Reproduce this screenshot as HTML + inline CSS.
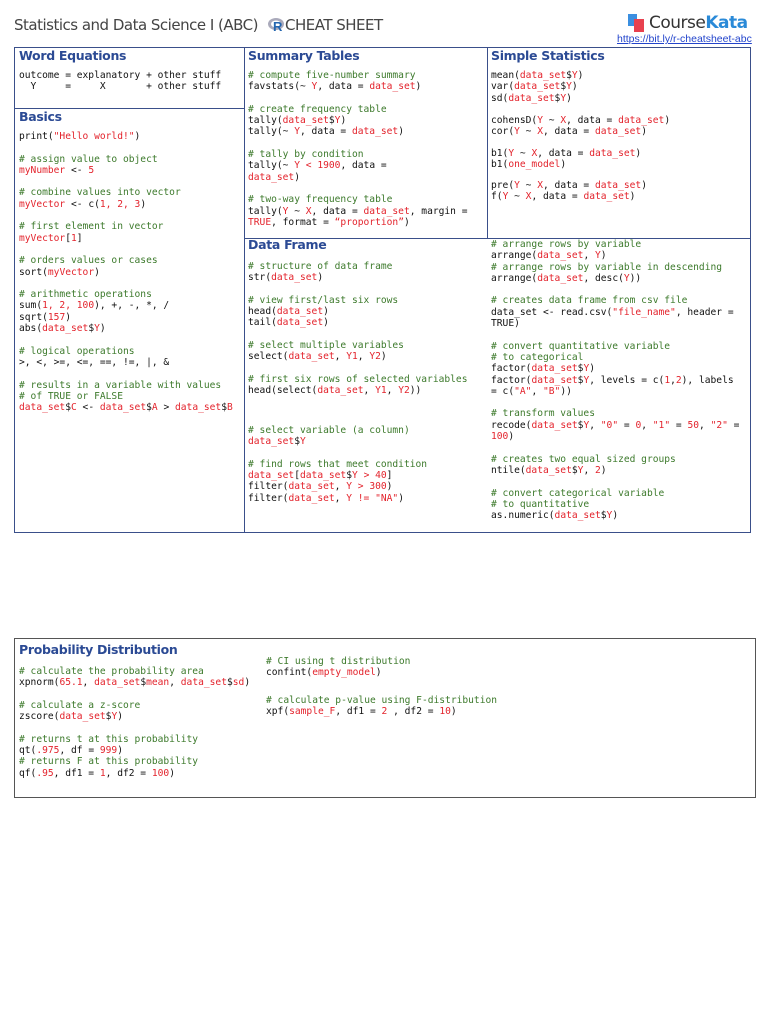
<!DOCTYPE html>
<html><head><meta charset="utf-8"><style>
body{margin:0;width:768px;height:1024px;background:#fff;position:relative;overflow:hidden;font-family:"Liberation Sans",sans-serif}
.b{position:absolute;border:1px solid #3a4f8a}
.h{position:absolute;color:#2b4a94;font-weight:bold;font-size:12.5px;font-family:"DejaVu Sans","Liberation Sans",sans-serif;letter-spacing:-0.3px}
pre{position:absolute;margin:0;font-family:"DejaVu Sans Mono","Liberation Mono",monospace;font-size:9.6px;line-height:11.3px;color:#111}
.c{color:#3d7a2c}.r{color:#e3232c}
</style></head><body>
<div style="position:absolute;left:14px;top:16px;font-size:15px;color:#444;font-family:'DejaVu Sans',sans-serif;letter-spacing:-0.5px">Statistics and Data Science I (ABC)</div>
<div style="position:absolute;left:267px;top:16px;width:17px;height:17px"><svg width="17" height="17"><ellipse cx="9" cy="8" rx="8" ry="6" fill="#aab"/><ellipse cx="9" cy="8" rx="5" ry="3.5" fill="#fff"/><text x="6" y="15" font-size="13" font-weight="bold" fill="#2466b0" font-family="Liberation Sans">R</text></svg></div>
<div style="position:absolute;left:285px;top:16px;font-size:15px;color:#444;font-family:'DejaVu Sans',sans-serif;letter-spacing:-0.5px">CHEAT SHEET</div>
<svg style="position:absolute;left:627px;top:13px" width="20" height="20"><rect x="1" y="1" width="9" height="12" fill="#3b8fe0"/><rect x="7" y="6" width="10" height="13" fill="#e8414f"/></svg>
<div style="position:absolute;left:649px;top:13px;font-size:17px;color:#333;font-family:'DejaVu Sans',sans-serif;letter-spacing:-0.5px">Course<span style="color:#2a8ad8;font-weight:bold">Kata</span></div>
<div style="position:absolute;left:617px;top:33px;font-size:10.5px;color:#2244cc;text-decoration:underline">https://bit.ly/r-cheatsheet-abc</div>

<div class="b" style="left:14px;top:47px;width:735px;height:484px"></div>
<div style="position:absolute;left:244px;top:47px;width:1px;height:485px;background:#3a4f8a"></div>
<div style="position:absolute;left:487px;top:47px;width:1px;height:191px;background:#3a4f8a"></div>
<div style="position:absolute;left:14px;top:108px;width:230px;height:1px;background:#3a4f8a"></div>
<div style="position:absolute;left:244px;top:238px;width:506px;height:1px;background:#3a4f8a"></div>

<div class="h" style="left:19px;top:48px">Word Equations</div>
<pre style="left:19px;top:70px">outcome = explanatory + other stuff
  Y     =     X       + other stuff</pre>
<div class="h" style="left:19px;top:109px">Basics</div>
<pre style="left:19px;top:131px">print(<span class="r">"Hello world!"</span>)

<span class="c"># assign value to object</span>
<span class="r">myNumber</span> &lt;- <span class="r">5</span>

<span class="c"># combine values into vector</span>
<span class="r">myVector</span> &lt;- c(<span class="r">1, 2, 3</span>)

<span class="c"># first element in vector</span>
<span class="r">myVector</span>[<span class="r">1</span>]

<span class="c"># orders values or cases</span>
sort(<span class="r">myVector</span>)

<span class="c"># arithmetic operations</span>
sum(<span class="r">1, 2, 100</span>), +, -, *, /
sqrt(<span class="r">157</span>)
abs(<span class="r">data_set</span>$<span class="r">Y</span>)

<span class="c"># logical operations</span>
&gt;, &lt;, &gt;=, &lt;=, ==, !=, |, &amp;

<span class="c"># results in a variable with values</span>
<span class="c"># of TRUE or FALSE</span>
<span class="r">data_set</span>$<span class="r">C</span> &lt;- <span class="r">data_set</span>$<span class="r">A</span> &gt; <span class="r">data_set</span>$<span class="r">B</span></pre>

<div class="h" style="left:248px;top:48px">Summary Tables</div>
<pre style="left:248px;top:70px"><span class="c"># compute five-number summary</span>
favstats(~ <span class="r">Y</span>, data = <span class="r">data_set</span>)

<span class="c"># create frequency table</span>
tally(<span class="r">data_set</span>$<span class="r">Y</span>)
tally(~ <span class="r">Y</span>, data = <span class="r">data_set</span>)

<span class="c"># tally by condition</span>
tally(~ <span class="r">Y &lt; 1900</span>, data =
<span class="r">data_set</span>)

<span class="c"># two-way frequency table</span>
tally(<span class="r">Y</span> ~ <span class="r">X</span>, data = <span class="r">data_set</span>, margin =
<span class="r">TRUE</span>, format = <span class="r">“proportion”</span>)</pre>

<div class="h" style="left:491px;top:48px">Simple Statistics</div>
<pre style="left:491px;top:70px">mean(<span class="r">data_set</span>$<span class="r">Y</span>)
var(<span class="r">data_set</span>$<span class="r">Y</span>)
sd(<span class="r">data_set</span>$<span class="r">Y</span>)

cohensD(<span class="r">Y</span> ~ <span class="r">X</span>, data = <span class="r">data_set</span>)
cor(<span class="r">Y</span> ~ <span class="r">X</span>, data = <span class="r">data_set</span>)
</pre>
<pre style="left:491px;top:149px;line-height:10.5px">b1(<span class="r">Y</span> ~ <span class="r">X</span>, data = <span class="r">data_set</span>)
b1(<span class="r">one_model</span>)</pre>
<pre style="left:491px;top:180px">pre(<span class="r">Y</span> ~ <span class="r">X</span>, data = <span class="r">data_set</span>)
f(<span class="r">Y</span> ~ <span class="r">X</span>, data = <span class="r">data_set</span>)</pre>

<div class="h" style="left:248px;top:237px">Data Frame</div>
<pre style="left:248px;top:261px"><span class="c"># structure of data frame</span>
str(<span class="r">data_set</span>)

<span class="c"># view first/last six rows</span>
head(<span class="r">data_set</span>)
tail(<span class="r">data_set</span>)

<span class="c"># select multiple variables</span>
select(<span class="r">data_set</span>, <span class="r">Y1</span>, <span class="r">Y2</span>)

<span class="c"># first six rows of selected variables</span>
head(select(<span class="r">data_set</span>, <span class="r">Y1</span>, <span class="r">Y2</span>))</pre>
<pre style="left:248px;top:425px"><span class="c"># select variable (a column)</span>
<span class="r">data_set</span>$<span class="r">Y</span>

<span class="c"># find rows that meet condition</span>
<span class="r">data_set</span>[<span class="r">data_set</span>$<span class="r">Y</span> <span class="r">&gt; 40</span>]
filter(<span class="r">data_set</span>, <span class="r">Y</span> <span class="r">&gt; 300</span>)
filter(<span class="r">data_set</span>, <span class="r">Y</span> <span class="r">!= "NA"</span>)</pre>

<pre style="left:491px;top:239px"><span class="c"># arrange rows by variable</span>
arrange(<span class="r">data_set</span>, <span class="r">Y</span>)
<span class="c"># arrange rows by variable in descending</span>
arrange(<span class="r">data_set</span>, desc(<span class="r">Y</span>))

<span class="c"># creates data frame from csv file</span>
data_set &lt;- read.csv(<span class="r">"file_name"</span>, header =
TRUE)

<span class="c"># convert quantitative variable</span>
<span class="c"># to categorical</span>
factor(<span class="r">data_set</span>$<span class="r">Y</span>)
factor(<span class="r">data_set</span>$<span class="r">Y</span>, levels = c(<span class="r">1</span>,<span class="r">2</span>), labels
= c(<span class="r">"A"</span>, <span class="r">"B"</span>))

<span class="c"># transform values</span>
recode(<span class="r">data_set</span>$<span class="r">Y</span>, <span class="r">"0"</span> = <span class="r">0</span>, <span class="r">"1"</span> = <span class="r">50</span>, <span class="r">"2"</span> =
<span class="r">100</span>)

<span class="c"># creates two equal sized groups</span>
ntile(<span class="r">data_set</span>$<span class="r">Y</span>, <span class="r">2</span>)

<span class="c"># convert categorical variable</span>
<span class="c"># to quantitative</span>
as.numeric(<span class="r">data_set</span>$<span class="r">Y</span>)</pre>

<div class="b" style="left:14px;top:638px;width:740px;height:158px;border-color:#555"></div>
<div class="h" style="left:19px;top:642px">Probability Distribution</div>
<pre style="left:19px;top:666px"><span class="c"># calculate the probability area</span>
xpnorm(<span class="r">65.1</span>, <span class="r">data_set</span>$<span class="r">mean</span>, <span class="r">data_set</span>$<span class="r">sd</span>)

<span class="c"># calculate a z-score</span>
zscore(<span class="r">data_set</span>$<span class="r">Y</span>)

<span class="c"># returns t at this probability</span>
qt(<span class="r">.975</span>, df = <span class="r">999</span>)
<span class="c"># returns F at this probability</span>
qf(<span class="r">.95</span>, df1 = <span class="r">1</span>, df2 = <span class="r">100</span>)</pre>
<pre style="left:266px;top:656px"><span class="c"># CI using t distribution</span>
confint(<span class="r">empty_model</span>)</pre>
<pre style="left:266px;top:695px"><span class="c"># calculate p-value using F-distribution</span>
xpf(<span class="r">sample_F</span>, df1 = <span class="r">2</span> , df2 = <span class="r">10</span>)</pre>
</body></html>
